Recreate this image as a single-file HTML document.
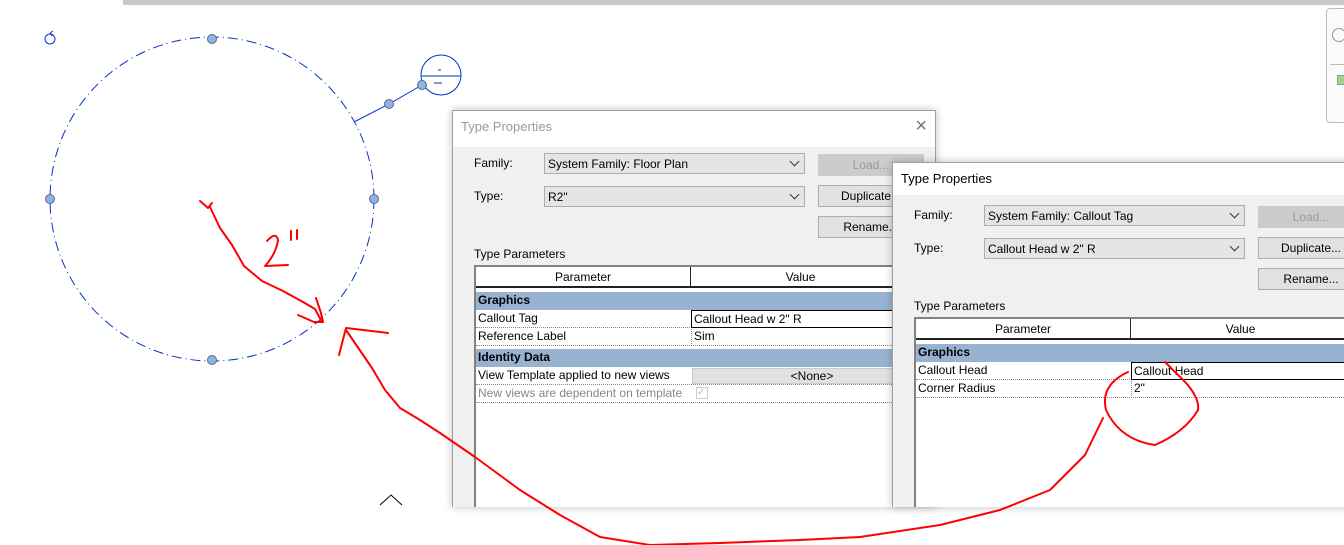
<!DOCTYPE html>
<html><head><meta charset="utf-8"><style>
*{margin:0;padding:0;box-sizing:border-box}
body{width:1344px;height:545px;background:#fff;position:relative;overflow:hidden;font-family:"Liberation Sans",sans-serif;font-size:12px;color:#000}
.a{position:absolute}
.dlg{position:absolute;background:#f0f0f0;border:1px solid #a0a0a0;box-shadow:0 0 8px rgba(0,0,0,.25);overflow:hidden}
.tt{position:absolute;left:0;top:0;right:0;height:36px;background:#fff;font-size:13px;padding:8px 8px}
.cb{position:absolute;height:21px;background:#e5e5e5;border:1px solid #adadad;padding:3px 3px;font-size:12px}
.cb:after{content:"";position:absolute;right:6px;top:4px;width:6px;height:6px;border-right:1px solid #333;border-bottom:1px solid #333;transform:rotate(45deg)}
.bt{position:absolute;height:22px;background:#e1e1e1;border:1px solid #adadad;text-align:center;padding-top:3px;font-size:12px}
.tbl{position:absolute;background:#fff;border:2px solid #828282;border-bottom:none}
.hd{position:absolute;left:0;right:0;top:0;height:21px;border-bottom:2px solid #222;text-align:center;font-size:12px}
.row{position:absolute;left:0;right:0;height:18px;border-bottom:1px dotted #888;font-size:12px;padding:1px 2px}
.grp{position:absolute;left:0;right:0;height:18px;background:#97b3d1;font-weight:bold;padding:1px 2px;font-size:12px}
</style></head><body>
<div class="a" style="left:123px;top:0;width:1221px;height:5px;background:#c8c8c8"></div>
<div class="a" style="left:1326px;top:8px;width:24px;height:115px;border:1px solid #bbb;border-radius:4px;background:#fafafa"></div>
<div class="a" style="left:1332px;top:28px;width:14px;height:14px;border:1px solid #999;border-radius:50%"></div>
<div class="a" style="left:1330px;top:64px;width:20px;height:1px;background:#bbb"></div>
<div class="a" style="left:1337px;top:75px;width:8px;height:10px;background:#a8d08d;border:1px solid #7a9"></div>

<!-- dialog 1 -->
<div class="dlg" style="left:452px;top:110px;width:484px;height:397px;border-bottom:none">
 <div class="tt" style="color:#999">Type Properties<span style="position:absolute;right:8px;top:4px;font-size:20px;color:#777">×</span></div>
 <div class="a" style="left:21px;top:45px">Family:</div>
 <div class="cb" style="left:91px;top:42px;width:261px">System Family: Floor Plan</div>
 <div class="bt" style="left:365px;top:43px;width:106px;color:#999;background:#ccc;border-color:#ccc">Load...</div>
 <div class="a" style="left:21px;top:78px">Type:</div>
 <div class="cb" style="left:91px;top:75px;width:261px">R2"</div>
 <div class="bt" style="left:365px;top:74px;width:106px">Duplicate...</div>
 <div class="bt" style="left:365px;top:105px;width:106px">Rename...</div>
 <div class="a" style="left:21px;top:136px">Type Parameters</div>
 <div class="tbl" style="left:21px;top:154px;width:460px;height:250px">
  <div class="hd"><span class="a" style="left:0;width:214px;top:3px">Parameter</span><span class="a" style="left:214px;width:220px;border-left:1px solid #222;height:19px;top:0;padding-top:3px">Value</span></div>
  <div class="grp" style="top:25px">Graphics</div>
  <div class="row" style="top:43px">Callout Tag<span class="a" style="left:215px;top:0;width:240px;height:18px;border:1px solid #000;border-right:none;padding:1px 2px">Callout Head w 2" R</span></div>
  <div class="row" style="top:61px">Reference Label<span class="a" style="left:215px;top:1px;border-left:1px dotted #888;padding-left:2px;height:17px">Sim</span></div>
  <div class="grp" style="top:82px">Identity Data</div>
  <div class="row" style="top:100px">View Template applied to new views<span class="a" style="left:216px;top:1px;width:240px;height:16px;background:#e1e1e1;border:1px solid #ccc;text-align:center">&lt;None&gt;</span></div>
  <div class="row" style="top:118px;color:#888">New views are dependent on template<span class="a" style="left:220px;top:2px;width:12px;height:12px;border:1px solid #ccc;color:#bbb;font-size:10px;line-height:10px">✓</span></div>
 </div>
</div>

<!-- dialog 2 -->
<div class="dlg" style="left:892px;top:162px;width:470px;height:345px;border-bottom:none">
 <div class="tt" style="height:32px;padding-top:8px">Type Properties</div>
 <div class="a" style="left:21px;top:45px">Family:</div>
 <div class="cb" style="left:91px;top:42px;width:261px">System Family: Callout Tag</div>
 <div class="bt" style="left:365px;top:43px;width:106px;color:#999;background:#ccc;border-color:#ccc">Load...</div>
 <div class="a" style="left:21px;top:78px">Type:</div>
 <div class="cb" style="left:91px;top:75px;width:261px">Callout Head w 2" R</div>
 <div class="bt" style="left:365px;top:74px;width:106px">Duplicate...</div>
 <div class="bt" style="left:365px;top:105px;width:106px">Rename...</div>
 <div class="a" style="left:21px;top:136px">Type Parameters</div>
 <div class="tbl" style="left:21px;top:154px;width:460px;height:200px">
  <div class="hd"><span class="a" style="left:0;width:214px;top:3px">Parameter</span><span class="a" style="left:214px;width:220px;border-left:1px solid #222;height:19px;top:0;padding-top:3px">Value</span></div>
  <div class="grp" style="top:25px">Graphics</div>
  <div class="row" style="top:43px">Callout Head<span class="a" style="left:215px;top:0;width:240px;height:18px;border:1px solid #000;border-right:none;padding:1px 2px">Callout Head</span></div>
  <div class="row" style="top:61px">Corner Radius<span class="a" style="left:215px;top:1px;border-left:1px dotted #888;padding-left:2px;height:17px">2"</span></div>
 </div>
</div>

<svg class="a" style="left:0;top:0" width="1344" height="545">
 <g fill="none" stroke="#0033cc" stroke-width="1">
  <circle cx="212" cy="199" r="162" stroke-dasharray="10 4 1 4"/>
  <circle cx="50" cy="39" r="5"/>
  <path d="M50 33 l3 -2 M50 33 l2 3"/>
  <path d="M354 122 L389 104 L422 85"/>
  <circle cx="441" cy="75" r="20"/>
  <path d="M421 76 H461 M438 70 h3 M434 83 h8"/>
 </g>
 <g fill="#8ab4f0" stroke="#667" stroke-width="1">
  <circle cx="212" cy="39" r="4.5"/><circle cx="212" cy="360" r="4.5"/>
  <circle cx="50" cy="199" r="4.5"/><circle cx="374" cy="199" r="4.5"/>
  <circle cx="389" cy="104" r="4.5"/><circle cx="422" cy="85" r="4.5"/>
 </g>
 <path d="M380 505 L391 495 L402 505" fill="none" stroke="#000"/>
 <g fill="none" stroke="#f00" stroke-width="2" stroke-linecap="round" stroke-linejoin="round">
  <path d="M200 201 L208 208 L212 203 M210 207 L220 228 L232 245 L244 266 L262 281 L283 291 L303 302 L315 309 L322 322"/>
  <path d="M316 298 L321 313 L323 322 L314 322 L298 315"/>
  <path d="M267 241 Q276 231 278 240 Q276 254 265 266 L288 265 M291 231 v9 M297 230 v9"/>
  <path d="M339 355 L346 328 L388 333"/>
  <path d="M346 330 L372 368 L385 390 L400 408 L420 420 L440 433 L475 457 L520 490 L560 515 L600 537 L650 545 L720 543 L800 540 L860 537 L940 525 L1000 510 L1050 490 L1085 455 L1103 418"/>
  <path d="M1128 372 Q1100 385 1106 410 Q1120 440 1155 445 Q1185 432 1198 410 Q1200 395 1178 375 L1165 362"/>
 </g>
</svg>
</body></html>
